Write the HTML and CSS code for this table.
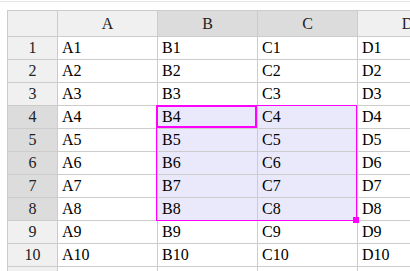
FILE: index.html
```html
<!DOCTYPE html>
<html>
<head>
<meta charset="utf-8">
<link rel="stylesheet" href="styles.css">
</head>
<body>
<div class="topline"></div>
<div class="sheet">
  <table class="grid">
    <colgroup><col class="c-h"><col class="c"><col class="c"><col class="c"><col class="c"></colgroup>
    <thead>
      <tr><th class="corner"></th><th>A</th><th class="hl">B</th><th class="hl">C</th><th>D</th></tr>
    </thead>
    <tbody>
      <tr><th>1</th><td>A1</td><td>B1</td><td>C1</td><td>D1</td></tr>
      <tr><th>2</th><td>A2</td><td>B2</td><td>C2</td><td>D2</td></tr>
      <tr><th>3</th><td>A3</td><td>B3</td><td>C3</td><td>D3</td></tr>
      <tr><th class="hl">4</th><td>A4</td><td class="sel">B4</td><td class="sel">C4</td><td>D4</td></tr>
      <tr><th class="hl">5</th><td>A5</td><td class="sel">B5</td><td class="sel">C5</td><td>D5</td></tr>
      <tr><th class="hl">6</th><td>A6</td><td class="sel">B6</td><td class="sel">C6</td><td>D6</td></tr>
      <tr><th class="hl">7</th><td>A7</td><td class="sel">B7</td><td class="sel">C7</td><td>D7</td></tr>
      <tr><th class="hl">8</th><td>A8</td><td class="sel">B8</td><td class="sel">C8</td><td>D8</td></tr>
      <tr><th>9</th><td>A9</td><td>B9</td><td>C9</td><td>D9</td></tr>
      <tr><th>10</th><td>A10</td><td>B10</td><td>C10</td><td>D10</td></tr>
      <tr><th>11</th><td>A11</td><td>B11</td><td>C11</td><td>D11</td></tr>
    </tbody>
  </table>
  <div class="range"></div>
  <div class="active"></div>
  <div class="handle"></div>
</div>
</body>
</html>
```
FILE: styles.css
```css
html, body {
  margin: 0;
  padding: 0;
  background: #fff;
  overflow: hidden;
}
body {
  width: 410px;
  height: 271px;
  font-family: "Liberation Serif", "Times New Roman", serif;
  font-size: 16px;
  color: #000;
}
.topline {
  margin-top: 1px;
  height: 1px;
  background: #e6e6e6;
}
.sheet {
  position: relative;
  margin: 8px 0 0 7px;
  width: 460px;
}
.grid {
  border-collapse: collapse;
  table-layout: fixed;
  width: 451px;
}
.c-h { width: 50px; }
.c { width: 100px; }
.grid th, .grid td {
  border: 1px solid #cccccc;
  height: 22px;
  padding: 0 4px;
  line-height: 22px;
  white-space: nowrap;
  overflow: hidden;
}
.grid th {
  background: #f0f0f0;
  font-weight: normal;
  text-align: center;
  color: #222;
}
.grid thead th {
  height: 25px;
  line-height: 25px;
}
.grid th.hl {
  background: #dcdcdc;
}
.grid td {
  text-align: left;
}
.grid td.sel {
  background: #e9e9fb;
}
.range {
  position: absolute;
  left: 149px;
  top: 95px;
  width: 199px;
  height: 114px;
  border: 1px solid #ff00ff;
  pointer-events: none;
}
.active {
  position: absolute;
  left: 149px;
  top: 95px;
  width: 97px;
  height: 19px;
  border: 2px solid #ff00ff;
  pointer-events: none;
}
.handle {
  position: absolute;
  left: 346px;
  top: 207px;
  width: 6px;
  height: 6px;
  background: #ff00ff;
}
```
